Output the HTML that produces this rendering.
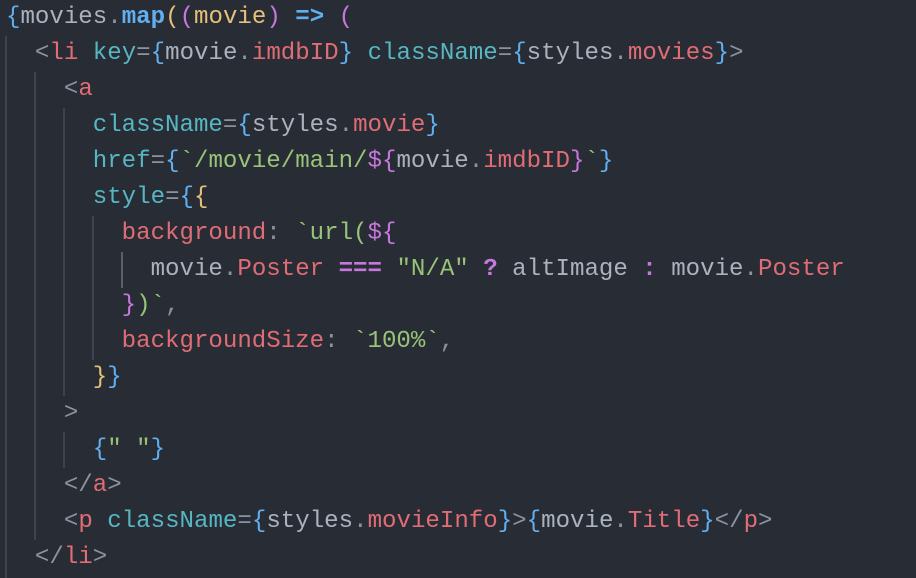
<!DOCTYPE html>
<html><head><meta charset="utf-8"><style>
body{margin:0;background:#282c34;width:916px;height:578px;overflow:hidden;position:relative;font-family:"Liberation Mono",monospace;font-size:24.1px;color:#abb2bf}
.l{position:absolute;left:6px;height:36px;line-height:36px;white-space:pre}
.g{position:absolute;width:2px;background:#3e4352}
.p{color:#8b93a1}.r{color:#e06c75}.c{color:#56b6c2}.b{color:#61afef}.m{color:#c678dd}.y{color:#e5c07b}.gr{color:#98c379}.w{color:#abb2bf}
</style></head><body>
<div class="g" style="left:5px;top:36px;height:542px"></div>
<div class="g" style="left:34px;top:72px;height:468px"></div>
<div class="g" style="left:63px;top:108px;height:288px"></div>
<div class="g" style="left:63px;top:432px;height:36px"></div>
<div class="g" style="left:92px;top:216px;height:144px"></div>
<div class="g" style="left:121px;top:252px;height:36px;background:#5a5f6e"></div>
<div class="l" style="top:0"><span class="b">{</span>movies<span class="p">.</span><span class="b" style="font-weight:bold">map</span><span class="y">(</span><span class="m">(</span><span class="y">movie</span><span class="m">)</span> <span class="b" style="font-weight:bold">=&gt;</span> <span class="m">(</span></div>
<div class="l" style="top:36px">  <span class="p">&lt;</span><span class="r">li</span> <span class="c">key</span><span class="p">=</span><span class="b">{</span>movie<span class="p">.</span><span class="r">imdbID</span><span class="b">}</span> <span class="c">className</span><span class="p">=</span><span class="b">{</span>styles<span class="p">.</span><span class="r">movies</span><span class="b">}</span><span class="p">&gt;</span></div>
<div class="l" style="top:72px">    <span class="p">&lt;</span><span class="r">a</span></div>
<div class="l" style="top:108px">      <span class="c">className</span><span class="p">=</span><span class="b">{</span>styles<span class="p">.</span><span class="r">movie</span><span class="b">}</span></div>
<div class="l" style="top:144px">      <span class="c">href</span><span class="p">=</span><span class="b">{</span><span class="gr">`/movie/main/</span><span class="m">${</span>movie<span class="p">.</span><span class="r">imdbID</span><span class="m">}</span><span class="gr">`</span><span class="b">}</span></div>
<div class="l" style="top:180px">      <span class="c">style</span><span class="p">=</span><span class="b">{</span><span class="y">{</span></div>
<div class="l" style="top:216px">        <span class="r">background</span><span class="p">:</span> <span class="gr">`url(</span><span class="m">${</span></div>
<div class="l" style="top:252px">          movie<span class="p">.</span><span class="r">Poster</span> <span class="m" style="font-weight:bold">===</span> <span class="gr">"N/A"</span> <span class="m" style="font-weight:bold">?</span> altImage <span class="m" style="font-weight:bold">:</span> movie<span class="p">.</span><span class="r">Poster</span></div>
<div class="l" style="top:288px">        <span class="m">}</span><span class="gr">)`</span><span class="p">,</span></div>
<div class="l" style="top:324px">        <span class="r">backgroundSize</span><span class="p">:</span> <span class="gr">`100%`</span><span class="p">,</span></div>
<div class="l" style="top:360px">      <span class="y">}</span><span class="b">}</span></div>
<div class="l" style="top:396px">    <span class="p">&gt;</span></div>
<div class="l" style="top:432px">      <span class="b">{</span><span class="gr">" "</span><span class="b">}</span></div>
<div class="l" style="top:468px">    <span class="p">&lt;/</span><span class="r">a</span><span class="p">&gt;</span></div>
<div class="l" style="top:504px">    <span class="p">&lt;</span><span class="r">p</span> <span class="c">className</span><span class="p">=</span><span class="b">{</span>styles<span class="p">.</span><span class="r">movieInfo</span><span class="b">}</span><span class="p">&gt;</span><span class="b">{</span>movie<span class="p">.</span><span class="r">Title</span><span class="b">}</span><span class="p">&lt;/</span><span class="r">p</span><span class="p">&gt;</span></div>
<div class="l" style="top:540px">  <span class="p">&lt;/</span><span class="r">li</span><span class="p">&gt;</span></div>
</body></html>
